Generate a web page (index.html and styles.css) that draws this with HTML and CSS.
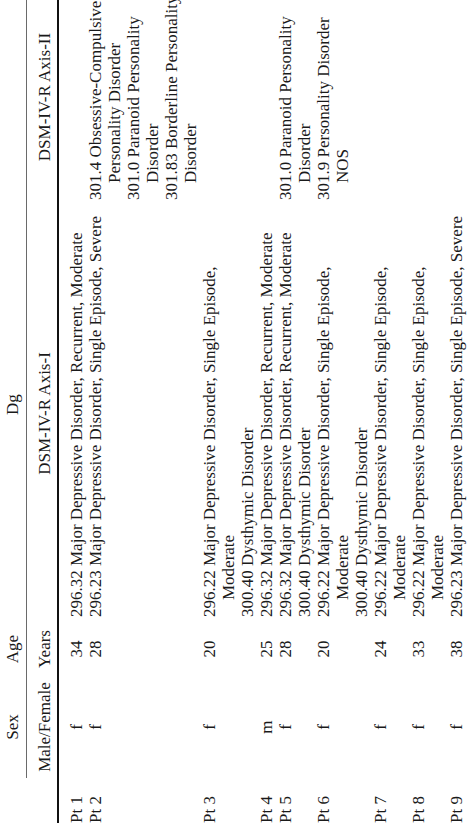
FILE: index.html
```html
<!DOCTYPE html>
<html lang="en">
<head>
<meta charset="utf-8">
<title>Patients</title>
<link rel="stylesheet" href="styles.css">
</head>
<body>
<div class="page">
<table class="dx">
<colgroup>
<col class="c-pt"><col class="c-sex"><col class="c-age"><col class="c-ax1"><col class="c-ax2">
</colgroup>
<thead>
<tr class="h1">
<th class="pt"></th>
<th class="ctr rule">Sex</th>
<th class="ctr rule">Age</th>
<th colspan="2" class="dg rule">Dg</th>
</tr>
<tr class="h2">
<th class="pt"></th>
<th class="ctr">Male/Female</th>
<th class="ctr">Years</th>
<th class="ctr">DSM-IV-R Axis-I</th>
<th class="ctr">DSM-IV-R Axis-II</th>
</tr>
</thead>
<tbody>
<tr class="first">
<td class="pt">Pt 1</td><td class="ctr">f</td><td class="ctr">34</td>
<td class="ax"><div class="e">296.32 Major Depressive Disorder, Recurrent, Moderate</div></td>
<td class="ax"></td>
</tr>
<tr>
<td class="pt">Pt 2</td><td class="ctr">f</td><td class="ctr">28</td>
<td class="ax"><div class="e">296.23 Major Depressive Disorder, Single Episode, Severe</div></td>
<td class="ax"><div class="e">301.4 Obsessive-Compulsive<br>Personality Disorder</div><div class="e">301.0 Paranoid Personality<br>Disorder</div><div class="e">301.83 Borderline Personality<br>Disorder</div></td>
</tr>
<tr>
<td class="pt">Pt 3</td><td class="ctr">f</td><td class="ctr">20</td>
<td class="ax"><div class="e">296.22 Major Depressive Disorder, Single Episode,<br>Moderate</div><div class="e">300.40 Dysthymic Disorder</div></td>
<td class="ax"></td>
</tr>
<tr>
<td class="pt">Pt 4</td><td class="ctr">m</td><td class="ctr">25</td>
<td class="ax"><div class="e">296.32 Major Depressive Disorder, Recurrent, Moderate</div></td>
<td class="ax"></td>
</tr>
<tr>
<td class="pt">Pt 5</td><td class="ctr">f</td><td class="ctr">28</td>
<td class="ax"><div class="e">296.32 Major Depressive Disorder, Recurrent, Moderate</div><div class="e">300.40 Dysthymic Disorder</div></td>
<td class="ax"><div class="e">301.0 Paranoid Personality<br>Disorder</div></td>
</tr>
<tr>
<td class="pt">Pt 6</td><td class="ctr">f</td><td class="ctr">20</td>
<td class="ax"><div class="e">296.22 Major Depressive Disorder, Single Episode,<br>Moderate</div><div class="e">300.40 Dysthymic Disorder</div></td>
<td class="ax"><div class="e">301.9 Personality Disorder<br>NOS</div></td>
</tr>
<tr>
<td class="pt">Pt 7</td><td class="ctr">f</td><td class="ctr">24</td>
<td class="ax"><div class="e">296.22 Major Depressive Disorder, Single Episode,<br>Moderate</div></td>
<td class="ax"></td>
</tr>
<tr>
<td class="pt">Pt 8</td><td class="ctr">f</td><td class="ctr">33</td>
<td class="ax"><div class="e">296.22 Major Depressive Disorder, Single Episode,<br>Moderate</div></td>
<td class="ax"></td>
</tr>
<tr>
<td class="pt">Pt 9</td><td class="ctr">f</td><td class="ctr">38</td>
<td class="ax"><div class="e">296.23 Major Depressive Disorder, Single Episode, Severe</div></td>
<td class="ax"></td>
</tr>
</tbody>
</table>
</div>
</body>
</html>
```
FILE: styles.css
```css
html, body {
  margin: 0;
  padding: 0;
  overflow: hidden;
  background: #ffffff;
}
body {
  width: 474px;
  height: 823px;
}
.page {
  width: 835px;
  transform-origin: 0 0;
  transform: translate(0, 824px) rotate(-90deg);
}
.dx {
  border-collapse: collapse;
  border-spacing: 0;
  table-layout: fixed;
  width: 835px;
  font-family: "Liberation Serif", "Times New Roman", serif;
  font-size: 17px;
  line-height: 19px;
  color: #1a1a1a;
}
.c-pt { width: 46px; }
.c-sex { width: 102px; }
.c-age { width: 54px; }
.c-ax1 { width: 417px; }
.c-ax2 { width: 216px; }
.dx th, .dx td {
  padding: 0;
  font-weight: normal;
  white-space: nowrap;
  vertical-align: top;
  text-align: left;
}
.dx .ctr { text-align: center; }
.h1 th { padding-top: 3px; padding-bottom: 4px; }
.h1 th.rule { border-bottom: 1px solid #6a6a6a; }
.h1 th.dg { padding-left: 207px; }
.h2 th { padding-top: 8px; padding-bottom: 3px; border-bottom: 2px solid #111111; }
.first td { padding-top: 8px; }
.dx td.pt { padding-left: 1px; }
.dx td.ax { padding-left: 5px; }
.e {
  padding-left: 1em;
  text-indent: -1em;
}
```
